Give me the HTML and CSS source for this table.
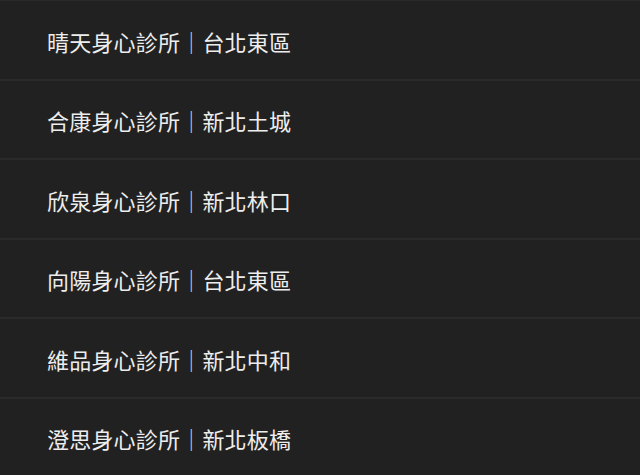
FILE: index.html
```html
<!DOCTYPE html>
<html lang="zh-Hant">
<head>
<meta charset="utf-8">
<link rel="stylesheet" href="styles.css">
</head>
<body>
<ul class="list">
  <li class="item">晴天身心診所<span class="sep">｜</span>台北東區</li>
  <li class="item">合康身心診所<span class="sep">｜</span>新北土城</li>
  <li class="item">欣泉身心診所<span class="sep">｜</span>新北林口</li>
  <li class="item">向陽身心診所<span class="sep">｜</span>台北東區</li>
  <li class="item">維品身心診所<span class="sep">｜</span>新北中和</li>
  <li class="item">澄思身心診所<span class="sep">｜</span>新北板橋</li>
</ul>
</body>
</html>
```
FILE: styles.css
```css
html, body {
  margin: 0;
  padding: 0;
  background: #212121;
  height: 100%;
  overflow: hidden;
}
.list {
  list-style: none;
  margin: 0;
  padding: 0;
  border-top: 2px solid #292929;
  margin-top: -1px;
}
.item {
  box-sizing: border-box;
  height: 79.5px;
  display: flex;
  align-items: center;
  padding: 2px 0 0 47px;
  border-bottom: 2px solid #2a2a2a;
  font-family: "Noto Sans CJK TC", "Noto Sans CJK SC", sans-serif;
  font-size: 22px;
  letter-spacing: 0.2px;
  color: #ededed;
  -webkit-font-smoothing: antialiased;
}
.sep {
  color: #d0d0d0;
}
```
